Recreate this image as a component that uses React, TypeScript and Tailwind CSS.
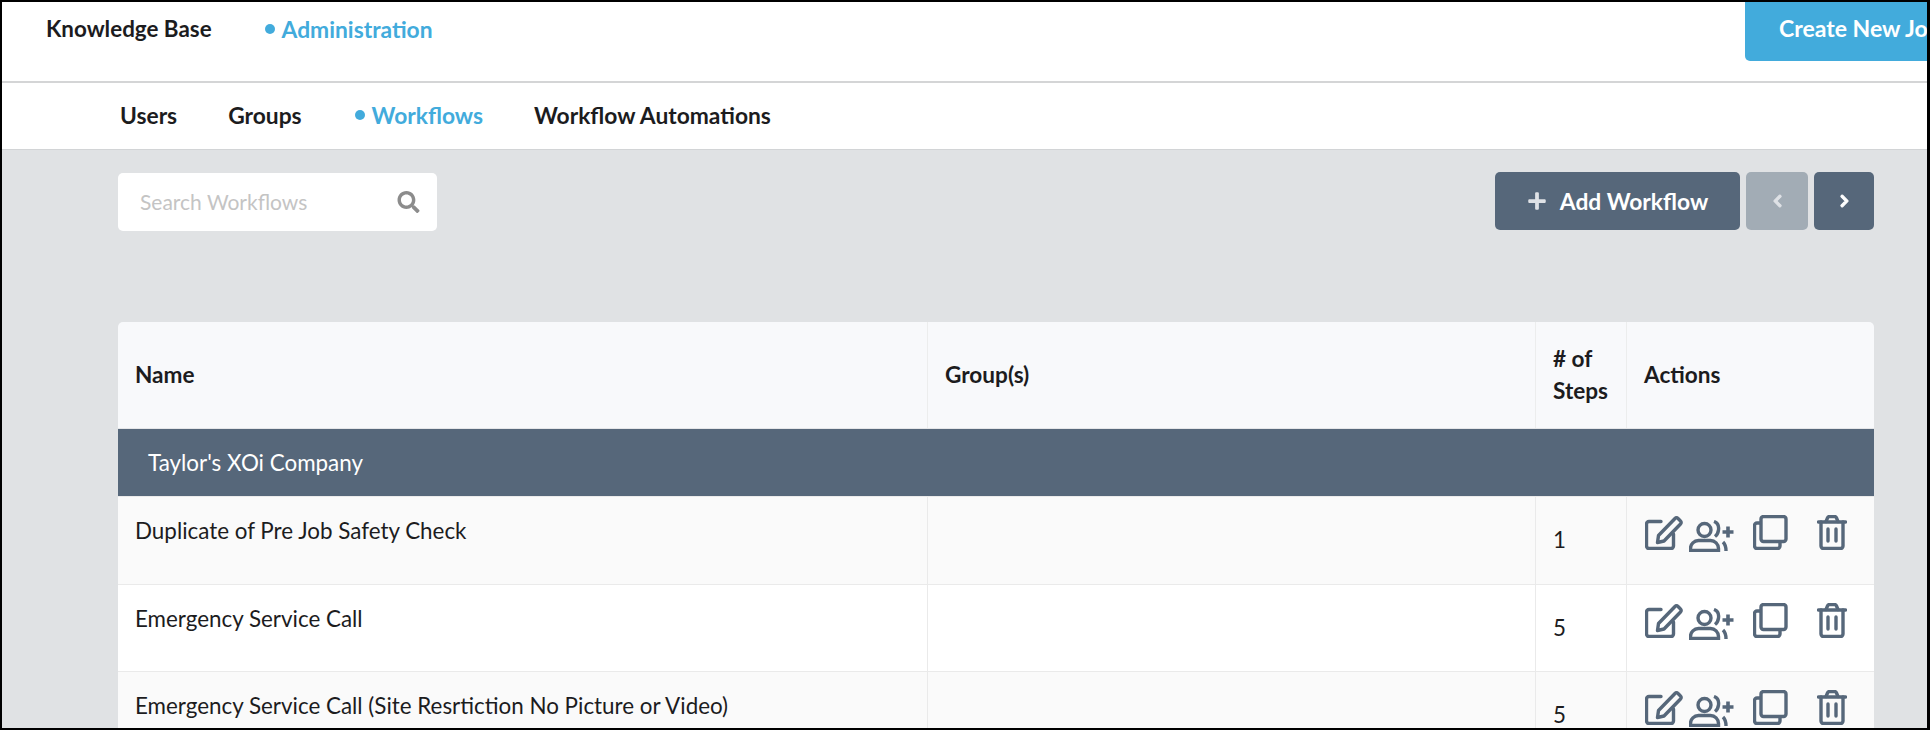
import { FaChevronLeft, FaChevronRight, FaPlus, FaSearch } from "react-icons/fa";

const rows = [
  { name: "Duplicate of Pre Job Safety Check", steps: 1, bg: "bg-[#fafafa]" },
  { name: "Emergency Service Call", steps: 5, bg: "bg-white" },
  { name: "Emergency Service Call (Site Resrtiction No Picture or Video)", steps: 5, bg: "bg-[#fafafa]" },
];

function EditIcon() {
  return (
    <svg width="38" height="35" viewBox="0 0 38 35" fill="none" stroke="#56677a" strokeWidth="3.4" strokeLinecap="round" strokeLinejoin="round">
      <path d="M16 6.500H4a2.500 2.500 0 0 0-2.500 2.500v22a2.500 2.500 0 0 0 2.500 2.500h22a2.500 2.500 0 0 0 2.500-2.500V19" />
      <path d="M13.500 20.500 30 3.500a2 2 0 0 1 3 0l2.500 2.500a2 2 0 0 1 0 3L19 26l-6.500 1.500z" />
    </svg>
  );
}

function UserPlusIcon() {
  return (
    <svg width="46" height="32" viewBox="0 0 46 32" fill="none" stroke="#56677a" strokeWidth="3.4">
      <circle cx="15.500" cy="10" r="6.500" />
      <path d="M1.500 30.500v-2a8 8 0 0 1 8-8h12a8 8 0 0 1 8 8v2z" />
      <path d="M25 1.500c4 1.500 5 5 4.500 8.500-.3 2.500-1.500 5-3.500 6.500" />
      <path d="M34 22c2 2 3 5 3 9" />
      <path d="M39 6.500v11M33.500 12h11" strokeWidth="3.600" />
    </svg>
  );
}

function CopyIcon() {
  return (
    <svg width="35" height="35" viewBox="0 0 35 35" fill="none" stroke="#56677a" strokeWidth="3.4" strokeLinejoin="round">
      <rect x="8" y="1.500" width="25" height="25" rx="2.500" />
      <path d="M8 8H4a2.500 2.500 0 0 0-2.500 2.500V31A2.500 2.500 0 0 0 4 33.500h20.500A2.500 2.500 0 0 0 27 31v-4.500" />
    </svg>
  );
}

function TrashIcon() {
  return (
    <svg width="30" height="35" viewBox="0 0 30 35" fill="none" stroke="#56677a" strokeWidth="3.4" strokeLinecap="round" strokeLinejoin="round">
      <path d="M1.500 7h27" />
      <path d="M9 6.500 10.500 3a2 2 0 0 1 1.800-1.500h5.400A2 2 0 0 1 19.500 3L21 6.500" />
      <path d="M4 7v24a2.500 2.500 0 0 0 2.500 2.500h17A2.500 2.500 0 0 0 26 31V7" />
      <path d="M11 14v12M19 14v12" />
    </svg>
  );
}

function NavDot() {
  return <span className="mr-[7px] h-[10px] w-[10px] rounded-full bg-[#42abdc]" />;
}

export default function App() {
  return (
    <div className="h-[730px] w-[1930px] overflow-hidden border-y-2 border-l-2 border-r-[3px] border-black bg-[#e0e2e4] font-['Lato',sans-serif] text-[22.4px] text-[#1c1c1e]">
      <header className="flex h-[81px] items-start justify-between border-b-2 border-[#d4d5d6] bg-white">
        <nav className="flex items-center pl-[44px] pt-[12px] text-[22.400px] font-bold leading-[30px]">
          <a>Knowledge Base</a>
          <a className="ml-[53px] flex items-center text-[22.800px] text-[#42abdc]">
            <NavDot />
            Administration
          </a>
        </nav>
        <button className="h-[59px] w-[182px] overflow-hidden whitespace-nowrap rounded-bl-[5px] bg-[#42abdc] pb-[6px] pl-[34px] text-left text-[23px] font-bold text-white">
          Create New Job
        </button>
      </header>

      <nav className="flex h-[67px] items-center border-b border-[#d2d4d6] bg-white pb-[2px] pl-[118px] text-[22.800px] font-bold">
        <a>Users</a>
        <a className="ml-[51px]">Groups</a>
        <a className="ml-[53px] flex items-center text-[#42abdc]">
          <NavDot />
          Workflows
        </a>
        <a className="ml-[51px]">Workflow Automations</a>
      </nav>

      <main className="pl-[116px] pr-[53px] pt-[22px]">
        <div className="flex items-start justify-between">
          <div className="mt-[1px] flex h-[58px] w-[319px] items-center justify-between rounded-[5px] bg-white pl-[22px] pr-[17px]">
            <span className="text-[21px] text-[#c4c4c4]">Search Workflows</span>
            <FaSearch className="h-[22px] w-[23px] text-[#8c8c8c]" />
          </div>
          <div className="flex">
            <button className="flex h-[58px] w-[245px] items-center justify-center rounded-[5px] bg-[#56677a] text-[22.800px] font-bold text-white">
              <FaPlus className="mr-[13px] h-[20px] w-[20px] text-[#dfe2e6]" />
              Add Workflow
            </button>
            <button className="ml-[6px] flex h-[58px] w-[62px] items-center justify-center rounded-[5px] bg-[#a2acb5]">
              <FaChevronLeft className="h-[14px] w-[11px] stroke-[40px] text-[#dfe2e6]" />
            </button>
            <button className="ml-[6px] flex h-[58px] w-[60px] items-center justify-center rounded-[5px] bg-[#56677a]">
              <FaChevronRight className="h-[14px] w-[11px] stroke-[40px] text-white" />
            </button>
          </div>
        </div>

        <section className="mt-[91px] overflow-hidden rounded-t-[5px]">
          <div className="grid h-[107px] grid-cols-[809px_608px_91px_248px] border-b border-[#e5e6e8] bg-[#f8f9fb] text-[22.600px] font-bold">
            <div className="flex items-center pl-[17px]">Name</div>
            <div className="flex items-center border-l border-[#eceded] pl-[17px]">Group(s)</div>
            <div className="flex items-center border-l border-[#eceded] pl-[17px] leading-[32px]">
              # of
              <br />
              Steps
            </div>
            <div className="flex items-center border-l border-[#eceded] pl-[17px]">Actions</div>
          </div>

          <div className="flex h-[67px] items-center bg-[#56677a] pl-[30px] text-white">Taylor's XOi Company</div>

          {rows.map((row, i) => (
            <div key={i} className={`grid h-[87.5px] grid-cols-[809px_608px_91px_248px] border-t border-[#eaeaea] ${row.bg}`}>
              <div className="pl-[17px] pt-[19px] leading-[30px]">{row.name}</div>
              <div className="border-l border-[#eaeaea]" />
              <div className="border-l border-[#eaeaea] pl-[17px] pt-[28px] leading-[30px]">{row.steps}</div>
              <div className="flex items-start border-l border-[#eaeaea] pl-[18px] pt-[18px]">
                <EditIcon />
                <span className="ml-[6px] mt-[5px]">
                  <UserPlusIcon />
                </span>
                <span className="ml-[18px]">
                  <CopyIcon />
                </span>
                <span className="ml-[29px]">
                  <TrashIcon />
                </span>
              </div>
            </div>
          ))}
        </section>
      </main>
    </div>
  );
}
